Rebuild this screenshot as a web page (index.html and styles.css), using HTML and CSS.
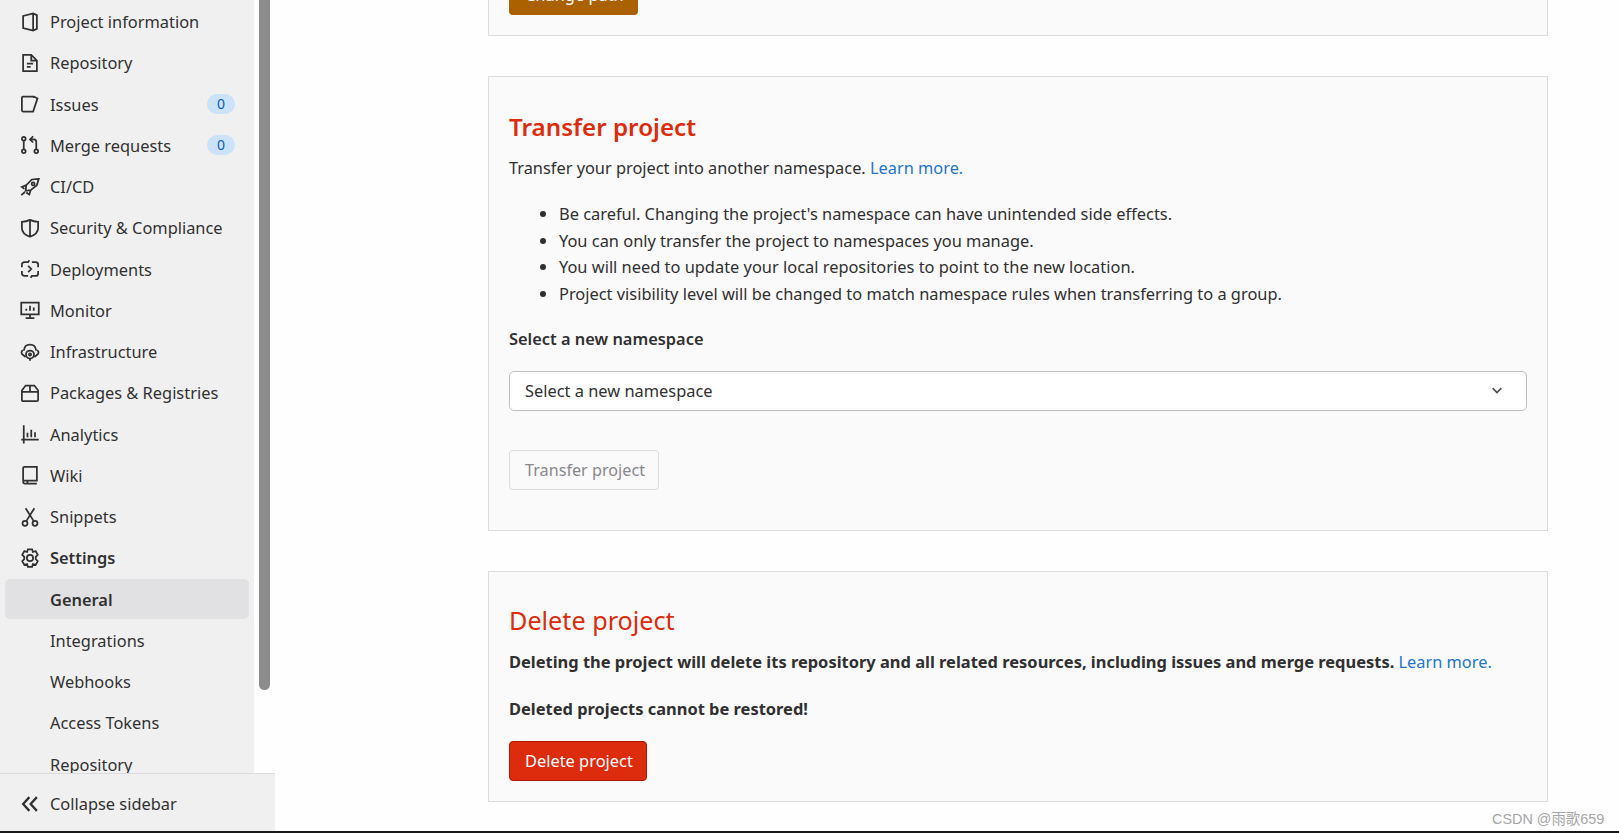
FILE: index.html
```html
<!DOCTYPE html>
<html lang="en">
<head>
	<meta charset="UTF-8" />
	<title>General Settings</title>
	<link rel="stylesheet" href="styles.css">
</head>
<body>
	<!-- sidebar -->
	<aside class="sidebar">
		<div class="sidebar-scroll">
			<ul class="nav">
				<li><a href="#"><svg class="icon" viewBox="0 0 16 16"><path d="M2.500 3.200 10.500 1.200 13.500 2.500v11l-3 1.300-8-2zM10.500 1.200v13.600"/></svg>Project information</a></li>
				<li><a href="#"><svg class="icon" viewBox="0 0 16 16"><path d="M2.500 1.500h6.500l4.500 4.500v8.500h-11zM9 1.500V6h4.500M5.500 8.500h5M5.500 11h3"/></svg>Repository</a></li>
				<li><a href="#"><svg class="icon" viewBox="0 0 16 16"><path d="M10.500 14h-8a1 1 0 0 1-1-1V3a1 1 0 0 1 1-1h8.500l3 1.500-3.500 10.500z"/><path d="M11 2v1"/></svg>Issues<span class="badge">0</span></a></li>
				<li><a href="#"><svg class="icon" viewBox="0 0 16 16"><circle cx="3" cy="3" r="1.500"/><circle cx="3" cy="13" r="1.500"/><circle cx="13" cy="13" r="1.500"/><path d="M3 4.500v7M13 11.500V5.500a2 2 0 0 0-2-2H8.500M10.500 1l-2.500 2.500 2.500 2.500"/></svg>Merge requests<span class="badge">0</span></a></li>
				<li><a href="#"><svg class="icon" viewBox="0 0 16 16"><path d="M15 1.500 9.500 2 5 6.500 4.500 11 8.500 10.500 13.500 6.500zM5 6.500 1.500 8l2 1.500M8.500 10.500l-1 3.500-2.500-1.500M4 12 1 14.500"/><circle cx="10.500" cy="5.500" r="1.200"/></svg>CI/CD</a></li>
				<li><a href="#"><svg class="icon" viewBox="0 0 16 16"><path d="M8 1.500c2 1 4.200 1.500 6.500 1.500v5c0 3.500-3 5.800-6.500 7C4.500 13.800 1.500 11.500 1.500 8V3C3.800 3 6 2.500 8 1.500zM8 1.500V15"/></svg>Security &amp; Compliance</a></li>
				<li><a href="#"><svg class="icon" viewBox="0 0 16 16"><path d="M1.500 6.500V4.500a2 2 0 0 1 2-2h3l1-1.500M14.500 9.500v2a2 2 0 0 1-2 2h-3l-1 1.500M9.500 2.500h3a2 2 0 0 1 2 2v2M6.500 13.500h-3a2 2 0 0 1-2-2v-2M6.500 5.500 9 8l-2.500 2.500"/></svg>Deployments</a></li>
				<li><a href="#"><svg class="icon" viewBox="0 0 16 16"><path d="M1 2h14v9.500H1zM8 11.500V14.500M4.500 14.500h7M5 8.500V7M8 8.500V4.500M11 8.500V6"/></svg>Monitor</a></li>
				<li><a href="#"><svg class="icon" viewBox="0 0 16 16"><path d="M4.500 12 1.500 9.500c-.8-1.500 0-3 1.800-3.300C3.500 3.500 5.500 2 8 2s4.500 1.500 4.700 4.200c1.800.3 2.600 1.800 1.800 3.300L11.500 12"/><circle cx="8" cy="10" r="3.200"/><circle cx="8" cy="10" r=".9"/><path d="M8 13.200V15"/></svg>Infrastructure</a></li>
				<li><a href="#"><svg class="icon" viewBox="0 0 16 16"><path d="M1.500 6 4.500 2h7l3 4v7.500a1 1 0 0 1-1 1h-11a1 1 0 0 1-1-1zM1.500 7h13M8 2v5"/></svg>Packages &amp; Registries</a></li>
				<li><a href="#"><svg class="icon" viewBox="0 0 16 16"><path d="M3 1v14.500M1 12.500h14M6 10.500V7M9 10.500V4.500M12 10.500V6.500"/></svg>Analytics</a></li>
				<li><a href="#"><svg class="icon" viewBox="0 0 16 16"><path d="M2.500 12.500V2.500a1 1 0 0 1 1-1h10v11h-10a1 1 0 0 0-1 1 1.300 1.300 0 0 0 1.300 1.300h9.700M6 12.500v3"/></svg>Wiki</a></li>
				<li><a href="#"><svg class="icon" viewBox="0 0 16 16"><circle cx="4" cy="13" r="2"/><circle cx="12" cy="13" r="2"/><path d="M5 11.300 11.500 1M11 11.300 4.500 1"/></svg>Snippets</a></li>
				<li class="current"><a href="#"><svg class="icon" viewBox="0 0 16 16"><path d="M6.300 1h3.400l.6 2.200 2.200-.7 1.700 3-1.600 1.600v1.800l1.600 1.600-1.700 3-2.200-.7-.6 2.200H6.300l-.6-2.200-2.200.7-1.700-3 1.600-1.600V7.100L1.800 5.500l1.700-3 2.200.7z"/><circle cx="8" cy="8" r="2.500"/></svg>Settings</a></li>
				<li class="active"><a href="#"><span class="no-icon"></span>General</a></li>
				<li><a href="#"><span class="no-icon"></span>Integrations</a></li>
				<li><a href="#"><span class="no-icon"></span>Webhooks</a></li>
				<li><a href="#"><span class="no-icon"></span>Access Tokens</a></li>
				<li><a href="#"><span class="no-icon"></span>Repository</a></li>
			</ul>
			<div class="scroll-track"><div class="scroll-thumb"></div></div>
		</div>
		<a class="collapse" href="#"><svg class="icon icon-bold" viewBox="0 0 16 16"><path d="M7.500 2.500 2.500 8l5 5.500M13.500 2.500 8.500 8l5 5.500"/></svg>Collapse sidebar</a>
	</aside>

	<!-- content -->
	<main class="content">
		<section class="panel panel-top">
			<button class="btn btn-warning">Change path</button>
		</section>

		<section class="panel panel-transfer">
			<h4>Transfer project</h4>
			<p class="lead">Transfer your project into another namespace. <a href="#">Learn more.</a></p>
			<ul class="notes">
				<li>Be careful. Changing the project's namespace can have unintended side effects.</li>
				<li>You can only transfer the project to namespaces you manage.</li>
				<li>You will need to update your local repositories to point to the new location.</li>
				<li>Project visibility level will be changed to match namespace rules when transferring to a group.</li>
			</ul>
			<label class="field-label">Select a new namespace</label>
			<div class="select">Select a new namespace
				<svg viewBox="0 0 16 16"><path d="M4.500 6.500 8 10l3.500-3.500"/></svg>
			</div>
			<button class="btn btn-disabled">Transfer project</button>
		</section>

		<section class="panel panel-delete">
			<h4 class="h-light">Delete project</h4>
			<p class="lead"><strong>Deleting the project will delete its repository and all related resources, including issues and merge requests.</strong> <a href="#">Learn more.</a></p>
			<p class="warn"><strong>Deleted projects cannot be restored!</strong></p>
			<button class="btn btn-danger">Delete project</button>
		</section>
	</main>

	<div class="watermark">CSDN @雨歌659</div>
	<div class="screen-edge"></div>
</body>
</html>
```
FILE: styles.css
```css
*{
	margin:0;
	padding:0;
	box-sizing:border-box;
}
html,body{
	height:833px;
	overflow:hidden;
}
body{
	display:flex;
	background:#fefefe;
	font-family:"Noto Sans","Noto Sans CJK SC",sans-serif;
	font-size:16.4px;
	color:#303030;
}
li{
	list-style:none;
}
a{
	text-decoration:none;
}
strong{
	font-weight:700;
	font-size:16.45px;
}

/* sidebar */
.sidebar{
	display:flex;
	flex-direction:column;
	width:275px;
	height:831px;
	flex:none;
}
.sidebar-scroll{
	display:flex;
	height:773px;
	overflow:hidden;
}
.nav{
	width:254px;
	padding:1.5px 5px 0;
	background:#f0f0f0;
}
.nav li{
	height:40px;
	margin-bottom:1.25px;
}
.nav a{
	display:flex;
	align-items:center;
	height:100%;
	padding:0 15px;
	color:#303030;
	border-radius:5px;
}
.icon{
	width:20px;
	height:20px;
	margin-right:10px;
	flex:none;
	fill:none;
	stroke:#303030;
	stroke-width:1.4;
}
.icon-bold{
	stroke-width:1.800;
}
.no-icon{
	width:30px;
	flex:none;
}
.nav li.current a{
	font-weight:600;
}
.nav li.active a{
	background:#e1e1e4;
	font-weight:600;
}
.badge{
	margin-left:auto;
	margin-right:-1px;
	width:28px;
	height:20px;
	border-radius:10px;
	background:#cbe2f9;
	color:#0b5cad;
	font-size:14px;
	line-height:20px;
	text-align:center;
}
.scroll-track{
	padding:0 5px;
	width:21px;
}
.scroll-thumb{
	width:11px;
	height:690px;
	background:#8c8c8c;
	border-radius:0 0 6px 6px;
}
.collapse{
	display:flex;
	align-items:center;
	height:58px;
	padding:2px 0 0 20px;
	border-top:1px solid #dcdcde;
	background:#f0f0f0;
	color:#303030;
}

/* content */
.content{
	width:1060px;
	margin-left:213px;
}
.panel{
	border:1px solid #dcdcde;
	background:#fafafa;
	padding:0 20px;
	margin-bottom:40px;
}
.panel-top{
	display:flex;
	align-items:flex-end;
	height:36px;
	padding-bottom:20px;
	border-top:0;
	overflow:hidden;
}
.panel-transfer{
	height:455px;
	padding-top:30px;
}
.panel-delete{
	height:231px;
	padding-top:29px;
}
h4{
	font-size:24.200px;
	font-weight:600;
	line-height:40px;
	color:#dd2b0e;
}
.h-light{
	font-weight:400;
	font-size:25.200px;
	line-height:38px;
}
.lead{
	margin-top:3px;
	line-height:40px;
	font-size:16.35px;
}
.panel-transfer .lead{
	margin-top:1px;
}
.lead a{
	color:#1f75cb;
}
.notes{
	margin-top:13px;
	padding-left:50px;
}
.notes li{
	list-style:disc;
	height:26.500px;
	line-height:26.500px;
}
.field-label{
	display:block;
	margin-top:19px;
	font-weight:600;
	line-height:26px;
}
.select{
	display:flex;
	align-items:center;
	justify-content:space-between;
	height:40px;
	margin-top:19px;
	padding:0 19px 2px 15px;
	border:1px solid #bfbfc3;
	border-radius:5px;
	background:#fff;
}
.select svg{
	width:20px;
	height:20px;
	fill:none;
	stroke:#535158;
	stroke-width:1.400;
}
.btn{
	display:block;
	height:40px;
	padding:0 13px 1px 15px;
	border:1px solid transparent;
	border-radius:4px;
	font:inherit;
}
.panel-transfer .btn{
	margin-top:39px;
	padding-right:13px;
	font-size:16.2px;
}
.btn-warning{
	flex:none;
	margin-top:-20px;
	background:#ab6100;
	color:#fff;
}
.btn-disabled{
	background:#fafafa;
	border-color:#dcdcde;
	color:#89888d;
}
.btn-danger{
	margin-top:12px;
	background:#dd2b0e;
	border-color:#ae1800;
	color:#fff;
}
.warn{
	margin-top:7px;
	line-height:40px;
}

.watermark{
	position:absolute;
	left:1492px;
	top:807px;
	font-family:"Liberation Sans","Noto Sans CJK SC",sans-serif;
	font-size:14.400px;
	color:#a6a6a6;
}
.screen-edge{
	position:absolute;
	left:0;
	right:0;
	top:831px;
	height:2px;
	background:#16191c;
}
```
